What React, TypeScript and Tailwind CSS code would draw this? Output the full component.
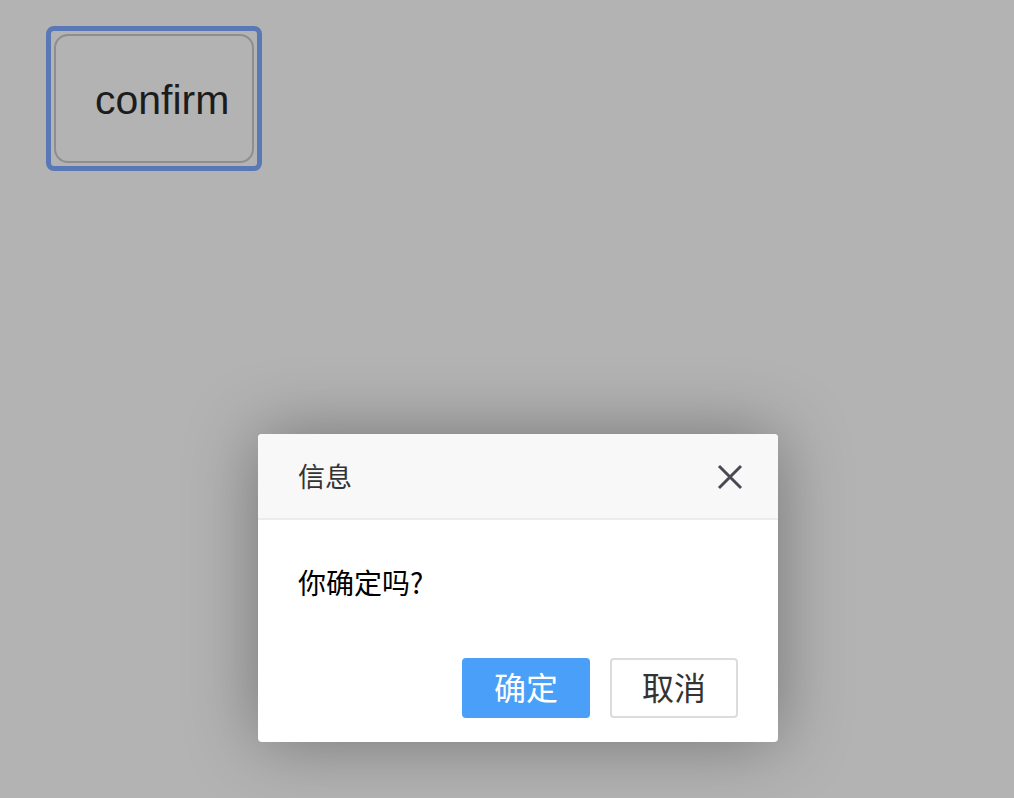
import React from 'react';

const FONT = { fontFamily: '"Liberation Sans", "Noto Sans CJK SC", sans-serif' };
const CJK = { fontFamily: '"Noto Sans CJK SC", sans-serif' };

export default function App() {
  return (
    <div className="relative w-[1014px] h-[798px] bg-[#b3b3b3] overflow-hidden" style={FONT}>
      {/* trigger button, focused */}
      <div className="absolute left-[46px] top-[26px] w-[216px] h-[145px] rounded-[8px] border-[5px] border-[#5a78b5] p-[3px]">
        <button className="w-full h-full rounded-[14px] border-2 border-[#8e8e8e] bg-[#b3b3b3] text-[41px] text-[#1c1c1c] pl-[39px] pt-[4px] text-left">
          confirm
        </button>
      </div>

      {/* dialog */}
      <div className="absolute left-[258px] top-[434px] w-[520px] h-[308px] bg-white rounded-[4px] shadow-[0_0_70px_rgba(0,0,0,0.35)] flex flex-col overflow-hidden">
        <div className="h-[86px] bg-[#f8f8f8] border-b-2 border-[#ececec] flex items-center justify-between pl-[40px] pr-[34px]">
          <span className="text-[27px] text-[#333]" style={CJK}>信息</span>
          <svg width="28" height="28" viewBox="0 0 28 28" className="mt-[2px]">
            <path d="M3 3 L25 25 M25 3 L3 25" stroke="#4a4a55" strokeWidth="3" strokeLinecap="butt" />
          </svg>
        </div>
        <div className="flex-1 px-[40px] pt-[48px]">
          <p className="text-[28px] text-black leading-none" style={CJK}>你确定吗?</p>
        </div>
        <div className="flex justify-end gap-[20px] pr-[40px] pb-[24px]" style={CJK}>
          <button className="w-[128px] h-[60px] rounded-[4px] bg-[#4a9ff9] text-white text-[32px] leading-none pb-[4px]">确定</button>
          <button className="w-[128px] h-[60px] rounded-[4px] bg-white border-2 border-[#dcdcdc] text-[#333] text-[32px] leading-none pb-[4px]">取消</button>
        </div>
      </div>
    </div>
  );
}
